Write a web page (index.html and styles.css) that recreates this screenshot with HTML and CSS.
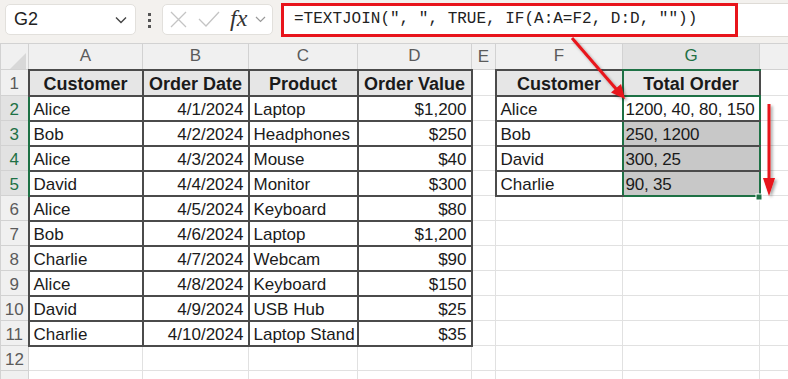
FILE: index.html
```html
<!DOCTYPE html>
<html lang="en">

<head>
  <meta charset="UTF-8">
  <title>TEXTJOIN lookup</title>
  <link rel="stylesheet" href="styles.css">
</head>

<body>
  <div id="top-bar">
    <div class="name-box">
      <span>G2</span>
      <svg width="12" height="8" viewBox="0 0 12 8"><path d="M1 1.5 L6 6.5 L11 1.5" fill="none" stroke="#444" stroke-width="1.4"/></svg>
    </div>
    <div class="dots"><i></i><i></i><i></i></div>
    <div class="fx-box">
      <svg width="17" height="17" viewBox="0 0 17 17"><path d="M1 1 L16 16 M16 1 L1 16" stroke="#c4c4c4" stroke-width="1.3"/></svg>
      <svg width="22" height="17" viewBox="0 0 22 17"><path d="M1 8 L8 15 L21 1" fill="none" stroke="#c4c4c4" stroke-width="1.3"/></svg>
      <span class="fx">fx</span>
      <svg width="11" height="7" viewBox="0 0 11 7"><path d="M1 1 L5.5 5.5 L10 1" fill="none" stroke="#999" stroke-width="1.2"/></svg>
    </div>
    <div class="formula-bar">
      <div class="formula">=TEXTJOIN(", ", TRUE, IF(A:A=F2, D:D, ""))</div>
    </div>
  </div>

  <table class="sheet">
    <colgroup>
      <col style="width: 28px">
      <col style="width: 114px">
      <col style="width: 106px">
      <col style="width: 109px">
      <col style="width: 114px">
      <col style="width: 24px">
      <col style="width: 127px">
      <col style="width: 137px">
      <col style="width: 60px">
    </colgroup>
    <tr class="col-heads">
      <th class="corner"><svg width="16" height="16" viewBox="0 0 16 16"><path d="M16 0 L16 16 L0 16 Z" fill="#d8d8d8"/></svg></th>
      <th>A</th><th>B</th><th>C</th><th>D</th><th>E</th><th>F</th><th class="sel-col">G</th><th></th>
    </tr>
    <tr class="first">
      <th class="rh">1</th>
      <td class="b h">Customer</td><td class="b h">Order Date</td><td class="b h">Product</td><td class="b h">Order Value</td>
      <td></td>
      <td class="b h f-edge">Customer</td><td class="b h g-top">Total Order</td><td></td>
    </tr>
    <tr>
      <th class="rh sel-row">2</th>
      <td class="b">Alice</td><td class="b r">4/1/2024</td><td class="b">Laptop</td><td class="b r">$1,200</td>
      <td></td>
      <td class="b f-edge">Alice</td><td class="b g active">1200, 40, 80, 150</td><td></td>
    </tr>
    <tr>
      <th class="rh sel-row">3</th>
      <td class="b">Bob</td><td class="b r">4/2/2024</td><td class="b">Headphones</td><td class="b r">$250</td>
      <td></td>
      <td class="b f-edge">Bob</td><td class="b g">250, 1200</td><td></td>
    </tr>
    <tr>
      <th class="rh sel-row">4</th>
      <td class="b">Alice</td><td class="b r">4/3/2024</td><td class="b">Mouse</td><td class="b r">$40</td>
      <td></td>
      <td class="b f-edge">David</td><td class="b g">300, 25</td><td></td>
    </tr>
    <tr>
      <th class="rh sel-row">5</th>
      <td class="b">David</td><td class="b r">4/4/2024</td><td class="b">Monitor</td><td class="b r">$300</td>
      <td></td>
      <td class="b f-edge">Charlie</td><td class="b g last">90, 35</td><td></td>
    </tr>
    <tr>
      <th class="rh">6</th>
      <td class="b">Alice</td><td class="b r">4/5/2024</td><td class="b">Keyboard</td><td class="b r">$80</td>
      <td></td><td></td><td></td><td></td>
    </tr>
    <tr>
      <th class="rh">7</th>
      <td class="b">Bob</td><td class="b r">4/6/2024</td><td class="b">Laptop</td><td class="b r">$1,200</td>
      <td></td><td></td><td></td><td></td>
    </tr>
    <tr>
      <th class="rh">8</th>
      <td class="b">Charlie</td><td class="b r">4/7/2024</td><td class="b">Webcam</td><td class="b r">$90</td>
      <td></td><td></td><td></td><td></td>
    </tr>
    <tr>
      <th class="rh">9</th>
      <td class="b">Alice</td><td class="b r">4/8/2024</td><td class="b">Keyboard</td><td class="b r">$150</td>
      <td></td><td></td><td></td><td></td>
    </tr>
    <tr>
      <th class="rh">10</th>
      <td class="b">David</td><td class="b r">4/9/2024</td><td class="b">USB Hub</td><td class="b r">$25</td>
      <td></td><td></td><td></td><td></td>
    </tr>
    <tr>
      <th class="rh">11</th>
      <td class="b">Charlie</td><td class="b r">4/10/2024</td><td class="b">Laptop Stand</td><td class="b r">$35</td>
      <td></td><td></td><td></td><td></td>
    </tr>
    <tr>
      <th class="rh">12</th>
      <td></td><td></td><td></td><td></td><td></td><td></td><td></td><td></td>
    </tr>
    <tr>
      <th class="rh"></th>
      <td></td><td></td><td></td><td></td><td></td><td></td><td></td><td></td>
    </tr>
  </table>

  <!-- callout arrows drawn over the sheet -->
  <svg class="arrows" width="788" height="379" viewBox="0 0 788 379">
    <defs>
      <filter id="shadow" x="-50%" y="-50%" width="200%" height="200%">
        <feDropShadow dx="2" dy="2" stdDeviation="1.5" flood-color="#000" flood-opacity="0.35"/>
      </filter>
    </defs>
    <g filter="url(#shadow)" fill="#e8141b" stroke="#e8141b">
      <line x1="572" y1="38" x2="617" y2="90" stroke-width="3"/>
      <path d="M611 92.5 L621 84 L625 99 Z" stroke="none"/>
      <line x1="769" y1="104" x2="769" y2="180" stroke-width="3"/>
      <path d="M763 178 L775 178 L769 196 Z" stroke="none"/>
    </g>
    <rect x="756" y="194" width="6" height="6" fill="#1e7145" stroke="#fff" stroke-width="1"/>
  </svg>
</body>

</html>
```

FILE: styles.css
```css
body {
  margin: 0;
  width: 788px;
  height: 379px;
  overflow: hidden;
  position: relative;
  background-color: #ffffff;
  font-family: "Liberation Sans", Arial, sans-serif;
  color: #1a1a1a;
}

#top-bar {
  display: flex;
  align-items: flex-start;
  height: 43px;
  box-sizing: border-box;
  padding: 4px 0 0 5px;
  background-color: #f3f1ee;
}

.name-box {
  display: flex;
  align-items: center;
  justify-content: space-between;
  width: 131px;
  height: 31px;
  box-sizing: border-box;
  padding: 0 8px 0 8px;
  background-color: #fff;
  border: 1px solid #e2e0dc;
  border-radius: 5px;
  font-size: 18px;
  color: #222;
}

.dots {
  display: flex;
  flex-direction: column;
  gap: 3px;
  margin: 9px 11px 0 12px;
}

.dots i {
  display: block;
  width: 3px;
  height: 3px;
  background-color: #555;
}

.fx-box {
  display: flex;
  align-items: center;
  width: 111px;
  height: 31px;
  box-sizing: border-box;
  padding: 0 0 0 7px;
  background-color: #fff;
  border: 1px solid #e2e0dc;
  border-radius: 5px;
}

.fx-box svg:nth-child(2) {
  margin-left: 11px;
}

.fx {
  margin: -3px 0 0 10px;
  font-family: "Liberation Serif", "Times New Roman", serif;
  font-style: italic;
  font-size: 24px;
  color: #333;
}

.fx-box svg:last-child {
  margin-left: 8px;
}

.formula-bar {
  flex: 1;
  margin: -1px 0 0 8px;
  height: 34px;
  background-color: #fff;
  border-top: 1px solid #dedbd6;
  border-bottom: 1px solid #dedbd6;
  box-sizing: border-box;
}

.formula {
  width: 457px;
  height: 34px;
  margin-top: -1px;
  box-sizing: border-box;
  border: 3px solid #e8141b;
  padding: 4px 0 0 10px;
  font-family: "Liberation Mono", "DejaVu Sans Mono", monospace;
  font-size: 16px;
  color: #222;
  background-color: #fff;
  white-space: nowrap;
}

.sheet {
  border-collapse: collapse;
  table-layout: fixed;
  width: 819px;
  font-size: 17px;
}

.sheet tr {
  height: 25px;
}

.sheet td,
.sheet th {
  padding: 3px 4px 0;
  line-height: 20px;
  border: 1px solid #e1e1e1;
  white-space: nowrap;
  overflow: hidden;
  text-align: left;
  font-weight: normal;
}

.sheet .col-heads {
  height: 26px;
}

.col-heads th {
  padding-top: 0;
  background-color: #f0f0f0;
  border-color: #d2d2d2;
  color: #5b5b5b;
  text-align: center;
}

.col-heads .corner {
  padding: 0 2px 0 0;
  text-align: right;
  vertical-align: bottom;
  line-height: 0;
}

.col-heads .sel-col {
  background-color: #e2e2e2;
  color: #1e7145;
  border-bottom: 2px solid #1e7145;
}

.sheet .first {
  height: 26px;
}

.sheet .rh {
  padding: 3px 0 0;
  background-color: #f0f0f0;
  border-color: #d2d2d2;
  color: #5b5b5b;
  text-align: center;
}

.sheet .sel-row {
  color: #1e7145;
  background-color: #e2e2e2;
  border-right: 2px solid #1e7145;
}

.sheet .b {
  border: 2px solid #4b4b4b;
}

.sheet .r {
  text-align: right;
}

.sheet .h {
  background-color: #e6e6e6;
  font-weight: bold;
  font-size: 18px;
  text-align: center;
}

.sheet .f-edge {
  border-right-color: #1e7145;
}

.sheet .g-top {
  border-bottom-color: #1e7145;
}

.sheet .g {
  padding: 3px 2px 0;
  background-color: #c8c8c8;
  border-right-color: #1e7145;
  border-left-color: #1e7145;
  letter-spacing: -0.2px;
}

.sheet .active {
  background-color: #fff;
}

.sheet .last {
  border-bottom-color: #1e7145;
}

.arrows {
  position: absolute;
  top: 0;
  left: 0;
  pointer-events: none;
}
```
